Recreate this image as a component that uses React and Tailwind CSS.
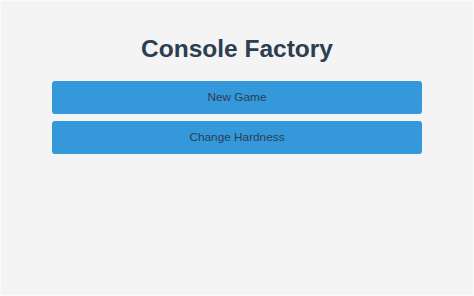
export default function App() {
  return (
    <div
      className="w-full h-[296px] bg-[#f4f4f4] border border-[#fafafa] pt-[34px]"
      style={{ fontFamily: '"Liberation Sans", Arial, sans-serif' }}
    >
      <div className="w-[370px] mx-auto flex flex-col">
        <h1 className="text-center text-[24.5px] leading-[28px] font-bold text-[#2c3e50]">
          Console Factory
        </h1>
        <div className="mt-[18px] flex flex-col gap-[7px]">
          <button className="h-[33px] w-full rounded-[3px] bg-[#3498db] text-[#2c3e50] text-[11.8px] flex items-center justify-center">
            New Game
          </button>
          <button className="h-[33px] w-full rounded-[3px] bg-[#3498db] text-[#2c3e50] text-[11.8px] flex items-center justify-center">
            Change Hardness
          </button>
        </div>
      </div>
    </div>
  );
}
